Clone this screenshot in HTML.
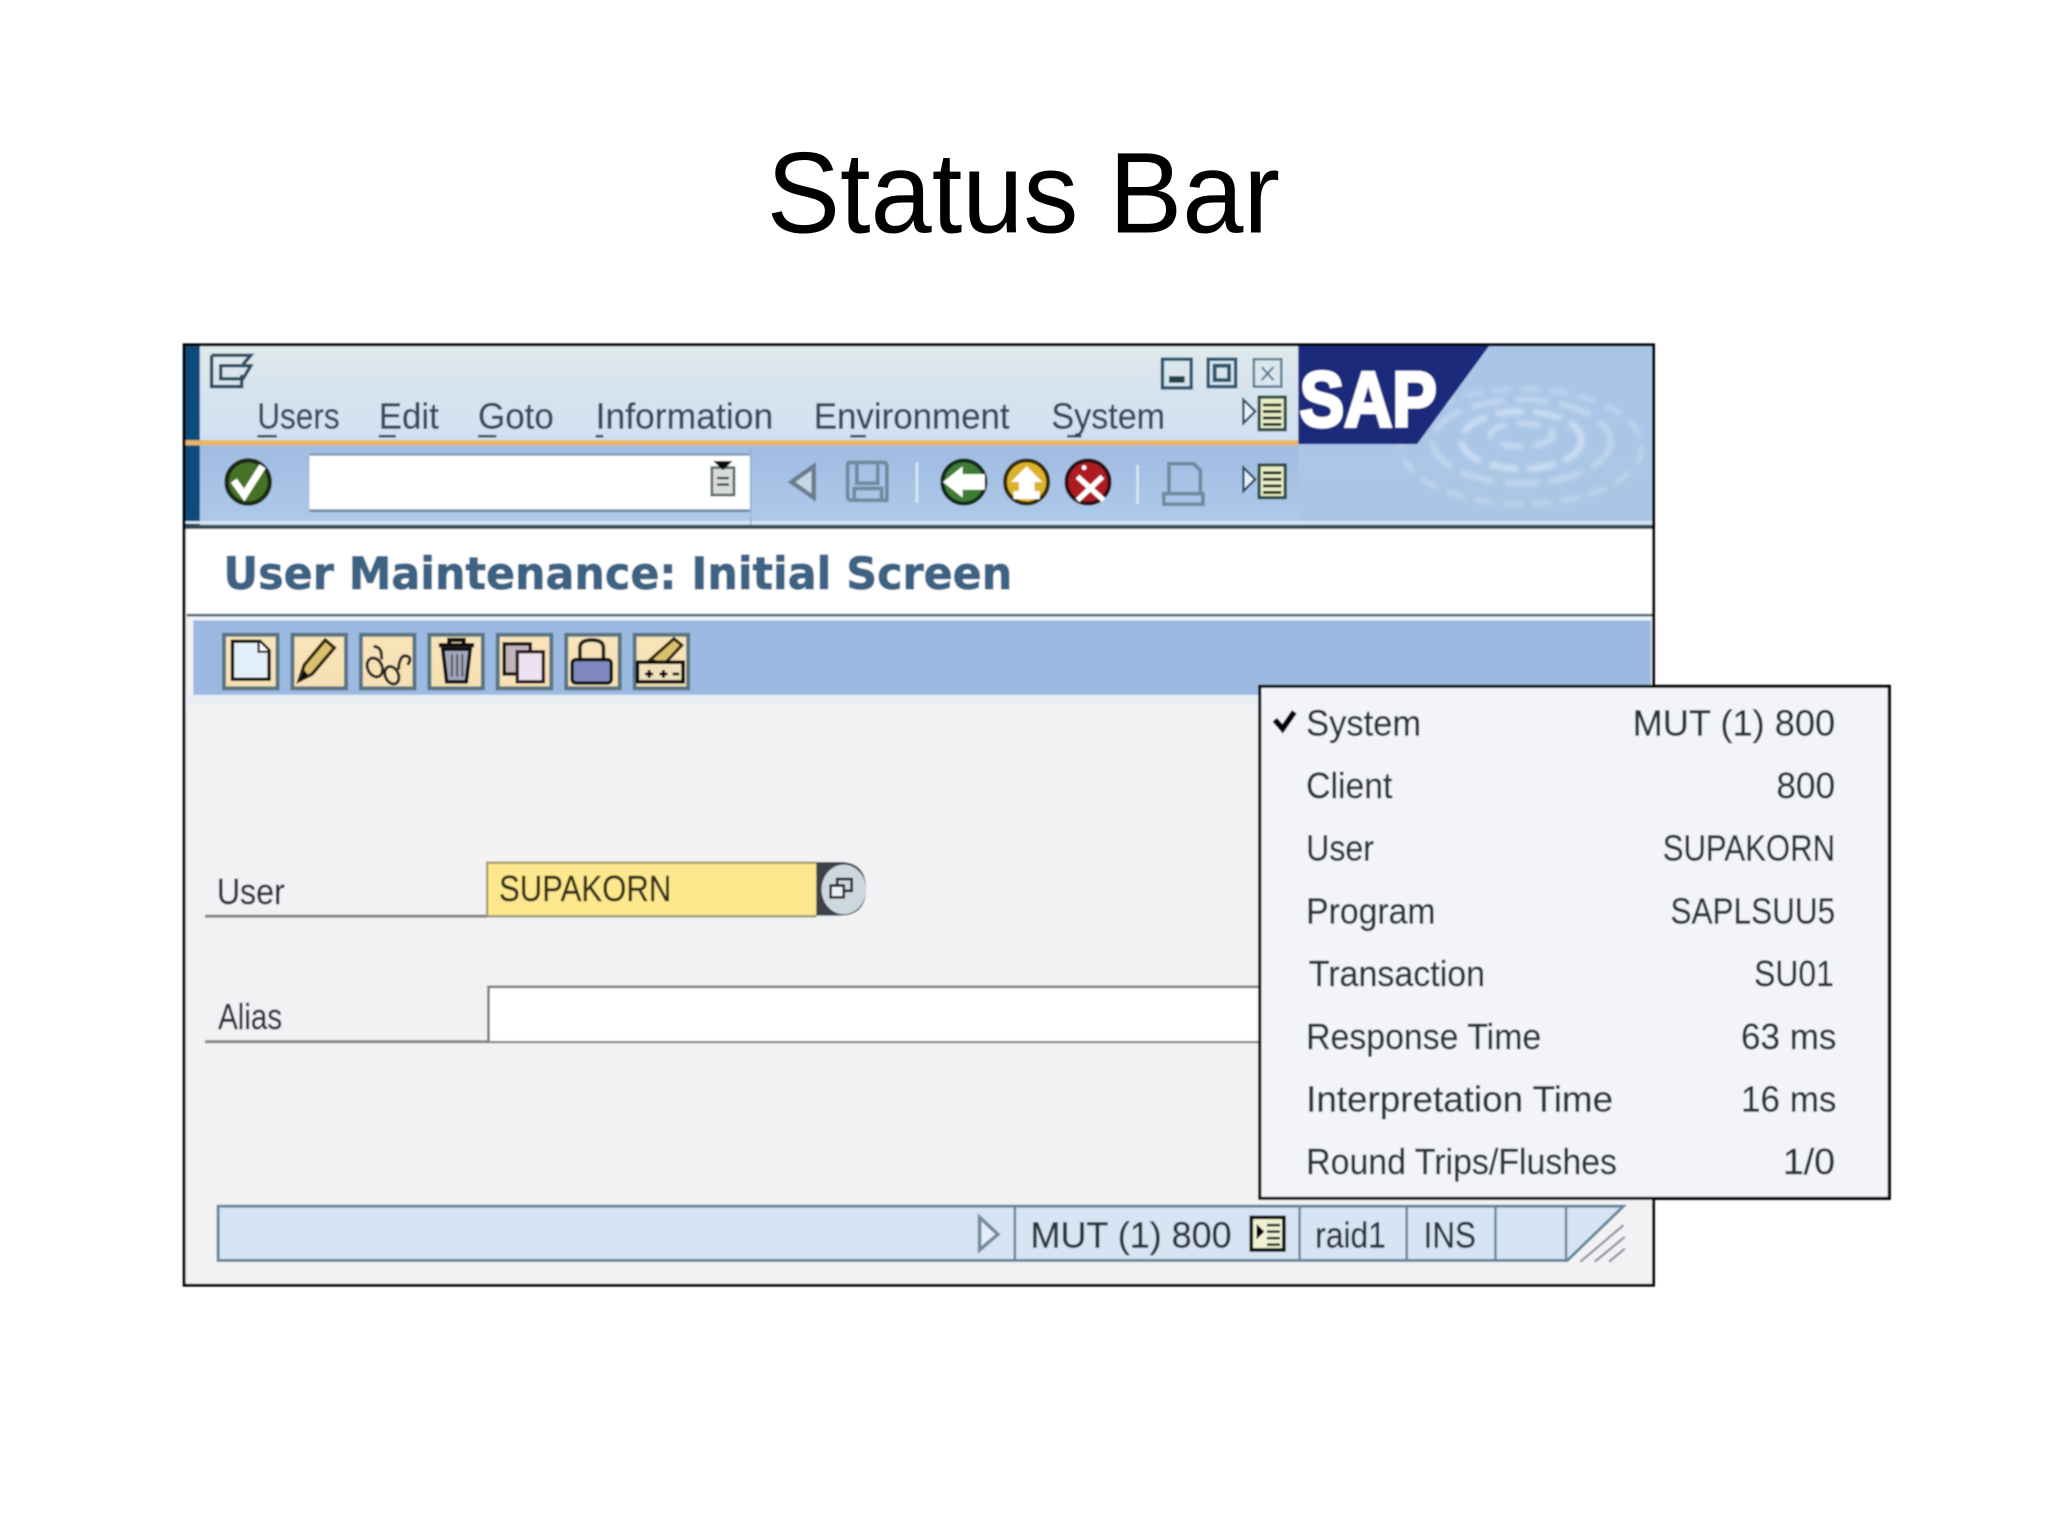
<!DOCTYPE html>
<html><head><meta charset="utf-8"><style>
html,body{margin:0;padding:0;background:#fff;width:2048px;height:1536px;overflow:hidden}
svg{display:block}
text{font-family:"Liberation Sans",sans-serif}
.m{font-size:28px;fill:#37495a;stroke:#37495a;stroke-width:.3px}
.t{font-size:28px;fill:#2c333a;stroke:#2c333a;stroke-width:.3px}
</style></head><body>
<svg width="2048" height="1536" viewBox="0 0 1568 1176" xmlns="http://www.w3.org/2000/svg">
<defs>
<linearGradient id="hd" x1="0" y1="0" x2="0" y2="1"><stop offset="0" stop-color="#dfe9e9"/><stop offset=".5" stop-color="#d6e3ef"/><stop offset="1" stop-color="#d2e0f2"/></linearGradient>
<linearGradient id="tb" x1="0" y1="0" x2="0" y2="1"><stop offset="0" stop-color="#a0bce2"/><stop offset="1" stop-color="#aec9e8"/></linearGradient>
<linearGradient id="lg" x1="0" y1="0" x2="0" y2="1"><stop offset="0" stop-color="#a9c5e8"/><stop offset="1" stop-color="#abc6e4"/></linearGradient>
<linearGradient id="btn" x1="0" y1="0" x2="0" y2="1"><stop offset="0" stop-color="#f8e4b8"/><stop offset="1" stop-color="#f6e0b4"/></linearGradient>
<filter id="s" x="-5%" y="-5%" width="110%" height="110%"><feGaussianBlur stdDeviation="0.6"/></filter>
<filter id="b" x="-10%" y="-10%" width="120%" height="120%"><feGaussianBlur stdDeviation="1.6"/></filter>
</defs>
<text x="587" y="178" font-size="88" textLength="393" lengthAdjust="spacingAndGlyphs" fill="#000">Status Bar</text>
<g filter="url(#s)">
<rect x="142" y="265" width="1124" height="719" fill="#f2f2f4"/>
<!-- header -->
<rect x="152" y="265" width="842" height="73" fill="url(#hd)"/>
<rect x="142" y="341" width="1124" height="61" fill="url(#tb)"/>
<rect x="994" y="265" width="272" height="137" fill="url(#lg)"/>
<g fill="none" stroke="#dfeaf7" filter="url(#b)">
<ellipse cx="1165" cy="333" rx="24" ry="9" stroke-width="4" stroke-dasharray="18 8" opacity=".6"/>
<ellipse cx="1165" cy="337" rx="46" ry="22" stroke-width="5" stroke-dasharray="22 7" opacity=".65"/>
<ellipse cx="1165" cy="338" rx="68" ry="32" stroke-width="4" stroke-dasharray="26 8" opacity=".5"/>
<ellipse cx="1165" cy="342" rx="92" ry="44" stroke-width="3.500" stroke-dasharray="14 8" opacity=".42"/>
</g>
<path d="M994 265H1140L1085 340H994Z" fill="#1a2a7c"/>
<text x="995" y="326" font-size="60" font-weight="700" fill="#fff" stroke="#fff" stroke-width="2.400" textLength="105" lengthAdjust="spacingAndGlyphs">SAP</text>
<rect x="142" y="265" width="11" height="138" fill="#0f4c7c"/>
<rect x="142" y="337" width="852" height="4" fill="#e9b468"/>
<rect x="142" y="399" width="1124" height="2" fill="#dfe9f2"/>
<rect x="142" y="402" width="1124" height="3" fill="#37474f"/>
<!-- title -->
<rect x="143" y="405" width="1123" height="65" fill="#fff"/>
<text x="171" y="451" font-size="34" font-weight="700" fill="#3c6284" stroke="#3c6284" stroke-width=".7" textLength="604" lengthAdjust="spacingAndGlyphs" style='font-family:"DejaVu Sans",sans-serif'>User Maintenance: Initial Screen</text>
<rect x="143" y="470" width="1123" height="2" fill="#4c6470"/>
<rect x="143" y="472" width="1123" height="3" fill="#eef3f8"/>
<rect x="148" y="475" width="1116" height="57" fill="#9cb9e2"/>
<rect x="143" y="532" width="1123" height="7" fill="#e9eef4"/>
<!-- menu -->
<path d="M162 272H192L186 279M162 272V296H185V287M169 280H192L186 290H169Z" fill="none" stroke="#2f4d62" stroke-width="2.600"/>
<text class="m" x="197" y="328" textLength="63" lengthAdjust="spacingAndGlyphs">Users</text>
<text class="m" x="290" y="328" textLength="46" lengthAdjust="spacingAndGlyphs">Edit</text>
<text class="m" x="366" y="328" textLength="58" lengthAdjust="spacingAndGlyphs">Goto</text>
<text class="m" x="456" y="328" textLength="136" lengthAdjust="spacingAndGlyphs">Information</text>
<text class="m" x="623" y="328" textLength="150" lengthAdjust="spacingAndGlyphs">Environment</text>
<text class="m" x="805" y="328" textLength="87" lengthAdjust="spacingAndGlyphs">System</text>
<g fill="#37495a"><rect x="197" y="333" width="15" height="2"/><rect x="290" y="333" width="13" height="2"/><rect x="366" y="333" width="14" height="2"/><rect x="456" y="333" width="6" height="2"/><rect x="651" y="333" width="12" height="2"/><rect x="817" y="333" width="11" height="2"/></g>
<!-- window controls -->
<g fill="none" stroke="#2a5670" stroke-width="2.600">
<rect x="890" y="275" width="22" height="22"/><rect x="925" y="275" width="21" height="21"/><rect x="930" y="280" width="11" height="11" stroke-width="3"/>
<rect x="960" y="275" width="21" height="21" stroke="#557a90" stroke-width="1.800"/><path d="M966 281L975 291M975 281L966 291" stroke="#557a90" stroke-width="1.500"/>
</g>
<rect x="895" y="288" width="12" height="5" fill="#263f4c"/>
<g id="more"><path d="M952 306L961 315L952 324Z" fill="#e8f0fa" stroke="#2f4d62" stroke-width="1.800"/><rect x="964" y="304" width="20" height="25" fill="#e6ecc4" stroke="#2c4a40" stroke-width="2.400"/><path d="M967 310H981M967 315H981M967 320H981M967 325H981" stroke="#1c2a1c" stroke-width="2.200"/></g>
<use href="#more" y="52"/>
<!-- toolbar -->
<circle cx="190" cy="369" r="16.500" fill="#477228" stroke="#1e2a16" stroke-width="3.400"/>
<path d="M179 368L187 379L201 357" fill="none" stroke="#fff" stroke-width="5.500"/>
<rect x="237" y="349" width="337" height="41" fill="#fff"/>
<path d="M237 391H574" stroke="#6f8aa3" stroke-width="2"/>
<path d="M237 348H574" stroke="#7f98ac" stroke-width="1.500"/>
<path d="M575 341V402" stroke="#98b0cb"/>
<rect x="545" y="358" width="17" height="21" fill="#d8dcd6" stroke="#5a6868" stroke-width="2"/>
<path d="M546 353H561L553.500 360Z" fill="#111"/>
<path d="M549 366H558M549 371H558" stroke="#444" stroke-width="1.800"/>
<path d="M623 357V381L606 369Z" fill="#c7d6e6" stroke="#6c7e8e" stroke-width="3.400"/>
<g fill="none" stroke="#6f8a9e" stroke-width="2.800"><path d="M650 354H676Q679 354 679 357V383H652Q649 383 649 380V355Z"/><path d="M656 354V370H672V354M654 383V374H675V383"/></g>
<path d="M702 354V385" stroke="#dbe7f2" stroke-width="2"/>
<circle cx="738" cy="369" r="16.500" fill="#3c7d35" stroke="#122a16" stroke-width="3"/>
<path d="M722 369L737 357V363H754V375H737V381Z" fill="#fff"/>
<circle cx="786" cy="369" r="16.500" fill="#dcb22a" stroke="#332b0c" stroke-width="3"/>
<path d="M786 357L798 369H792V376H796V382H776V376H780V369H774Z" fill="#fff"/>
<circle cx="833" cy="369" r="16.500" fill="#ae1a22" stroke="#331014" stroke-width="3"/>
<path d="M825 365L845 383M844 365L825 383" stroke="#fff" stroke-width="4"/>
<circle cx="830" cy="358" r="1.800" fill="#fff"/>
<path d="M871 356V386" stroke="#dbe7f2" stroke-width="2"/>
<g fill="none" stroke="#6f8a9e" stroke-width="2.800"><path d="M895 355H914L919 360V378H895Z"/><path d="M891 378H921V386H891Z"/></g>
<!-- app toolbar buttons -->
<g id="bt"><rect x="171.500" y="486" width="41" height="41" fill="url(#btn)" stroke="#5a7484" stroke-width="3"/></g>
<use href="#bt" x="52.400"/><use href="#bt" x="104.800"/><use href="#bt" x="157.200"/><use href="#bt" x="209.600"/><use href="#bt" x="262"/><use href="#bt" x="314.400"/>
<path d="M178 491H199L206 498V520H178Z" fill="#e3f0fa" stroke="#111" stroke-width="2.600"/>
<path d="M198 491V499H206" fill="#fff" stroke="#222" stroke-width="1.800"/>
<path d="M229 521L233 509L249 490L256 496L239 516Z" fill="#dcc070" stroke="#30260f" stroke-width="2.600"/>
<path d="M229 522L233 513L236 517Z" fill="#111"/>
<g fill="none" stroke="#222" stroke-width="2.300"><ellipse cx="287" cy="511" rx="5.500" ry="7.500" transform="rotate(-25 287 511)"/><ellipse cx="300" cy="517" rx="5" ry="7" transform="rotate(-25 300 517)"/><path d="M292 505Q293 495 286 495M305 513Q306 499 313 503Q315 505 312 509"/></g>
<path d="M339 497H360L357 522H342Z" fill="#a0a6bc" stroke="#111" stroke-width="2.800"/>
<path d="M336 494H363M344 494V490H355V494" fill="none" stroke="#111" stroke-width="3.200"/>
<path d="M346 501V518M350 501V518M354 501V518" stroke="#555" stroke-width="1.500"/>
<rect x="386" y="493" width="20" height="23" fill="#c4b2bc" stroke="#111" stroke-width="2.600"/>
<rect x="396" y="499" width="20" height="23" fill="#ece2f2" stroke="#2a1c1c" stroke-width="2.600"/>
<path d="M444 505V496Q444 490 453 490Q462 490 462 496V505" fill="none" stroke="#222" stroke-width="2.800"/>
<rect x="438" y="505" width="30" height="18" rx="3" fill="#8087bc" stroke="#111" stroke-width="2.600"/>
<path d="M498 505L516 489L522 494L508 509Z" fill="#dcc070" stroke="#30260f" stroke-width="2.400"/>
<rect x="488" y="507" width="35" height="15" fill="#f0e0bc" stroke="#111" stroke-width="2.800"/>
<path d="M494 516H500M497 513V519M505 516H511M508 513V519M515 516H520" stroke="#000" stroke-width="2.200"/>
<!-- fields -->
<path d="M157 701.500H373M157 797.500H964" stroke="#7d7f81" stroke-width="2.200"/>
<text class="t" x="166" y="692" textLength="52" lengthAdjust="spacingAndGlyphs">User</text>
<text class="t" x="167" y="788" textLength="49" lengthAdjust="spacingAndGlyphs">Alias</text>
<rect x="373" y="660" width="252" height="41" fill="#fde88e"/>
<path d="M373 701V660.500H625" fill="none" stroke="#a89c6c" stroke-width="1.800"/>
<path d="M373 701.500H625" stroke="#9c9470" stroke-width="1.800"/>
<text class="t" x="382" y="690" textLength="132" lengthAdjust="spacingAndGlyphs" style="fill:#332e12;stroke:#332e12">SUPAKORN</text>
<path d="M625 660H643Q663 660 663 680.500Q663 701 643 701H625Z" fill="#3a4248"/>
<ellipse cx="646" cy="681" rx="17" ry="19" fill="#cdd8de"/>
<rect x="636" y="678" width="10" height="9" fill="#eef2f2" stroke="#222" stroke-width="2"/>
<path d="M641 678V673H652V682H646" fill="none" stroke="#222" stroke-width="2"/>
<rect x="374" y="756" width="590" height="41" fill="#fff"/>
<path d="M374 797V755.500H964" fill="none" stroke="#7b7d7f" stroke-width="2"/>
<!-- status bar -->
<path d="M167 923.500H1243L1200 965H167Z" fill="#d6e4f3" stroke="#638499" stroke-width="2.200"/>
<path d="M777 924V965M995 924V965M1077 924V965M1145 924V965M1199 924V965" stroke="#638499" stroke-width="1.800"/>
<path d="M750 932L764 945L750 957Z" fill="#e4eef8" stroke="#748c9e" stroke-width="2.800"/>
<text class="t" x="789" y="955" textLength="154" lengthAdjust="spacingAndGlyphs">MUT (1) 800</text>
<rect x="958" y="932" width="25" height="25" fill="#f0f2d4" stroke="#111" stroke-width="2.800"/>
<path d="M962 937L968 943L962 949Z" fill="#000"/><path d="M970 938H980M970 943H980M970 948H980M970 953H980" stroke="#222" stroke-width="2"/>
<text class="t" x="1007" y="955" textLength="54" lengthAdjust="spacingAndGlyphs">raid1</text>
<text class="t" x="1090" y="955" textLength="40" lengthAdjust="spacingAndGlyphs">INS</text>
<path d="M1243 938L1210 966M1244 947L1221 966M1244 956L1232 966" stroke="#8d979f" stroke-width="1.800"/>
<!-- window border -->
<rect x="141" y="264" width="1125" height="720" fill="none" stroke="#000" stroke-width="2.200"/>
<!-- popup -->
<rect x="964.500" y="525.500" width="482" height="392" fill="#f3f4f9" stroke="#000" stroke-width="2.400"/>
<path d="M976 551L982 558L991 545" fill="none" stroke="#000" stroke-width="4.500"/>
<text class="t" x="1000" y="563" textLength="88" lengthAdjust="spacingAndGlyphs">System</text>
<text class="t" x="1000" y="611" textLength="66" lengthAdjust="spacingAndGlyphs">Client</text>
<text class="t" x="1000" y="659" textLength="52" lengthAdjust="spacingAndGlyphs">User</text>
<text class="t" x="1000" y="707" textLength="99" lengthAdjust="spacingAndGlyphs">Program</text>
<text class="t" x="1002" y="755" textLength="135" lengthAdjust="spacingAndGlyphs">Transaction</text>
<text class="t" x="1000" y="803" textLength="180" lengthAdjust="spacingAndGlyphs">Response Time</text>
<text class="t" x="1000" y="851" textLength="235" lengthAdjust="spacingAndGlyphs">Interpretation Time</text>
<text class="t" x="1000" y="899" textLength="238" lengthAdjust="spacingAndGlyphs">Round Trips/Flushes</text>
<text class="t" x="1250" y="563" textLength="155" lengthAdjust="spacingAndGlyphs">MUT (1) 800</text>
<text class="t" x="1360" y="611" textLength="45" lengthAdjust="spacingAndGlyphs">800</text>
<text class="t" x="1273" y="659" textLength="132" lengthAdjust="spacingAndGlyphs">SUPAKORN</text>
<text class="t" x="1279" y="707" textLength="126" lengthAdjust="spacingAndGlyphs">SAPLSUU5</text>
<text class="t" x="1343" y="755" textLength="61" lengthAdjust="spacingAndGlyphs">SU01</text>
<text class="t" x="1333" y="803" textLength="73" lengthAdjust="spacingAndGlyphs">63 ms</text>
<text class="t" x="1333" y="851" textLength="73" lengthAdjust="spacingAndGlyphs">16 ms</text>
<text class="t" x="1365" y="899" textLength="40" lengthAdjust="spacingAndGlyphs">1/0</text>
</g>
</svg>
</body></html>
